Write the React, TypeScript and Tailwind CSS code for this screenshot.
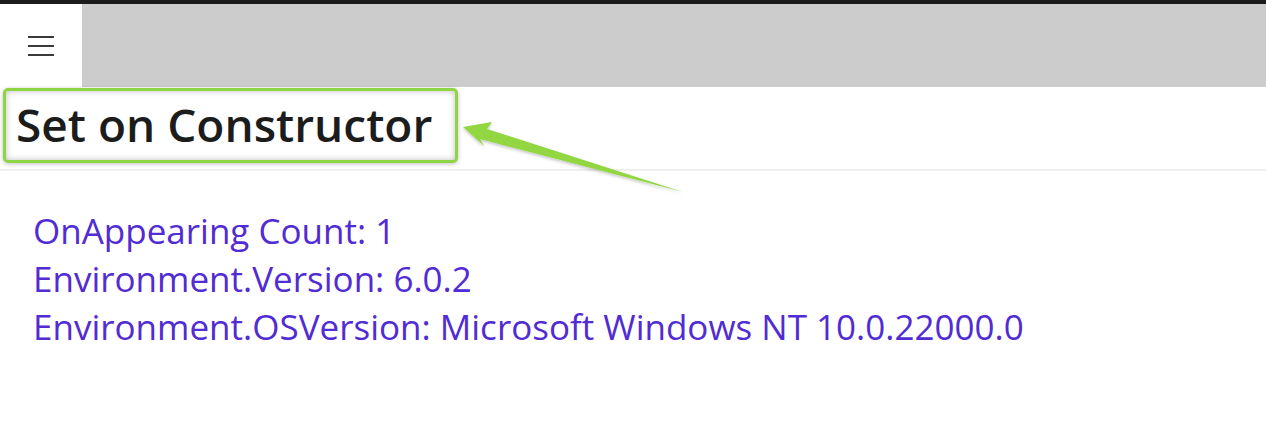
import React from "react";

export default function App() {
  return (
    <div className="relative w-[1266px] h-[429px] overflow-hidden bg-white" style={{ fontFamily: '"Open Sans", "Noto Sans", sans-serif' }}>
      {/* window top strip */}
      <div className="h-[4px] bg-[#1b1b1b]" />
      {/* nav bar */}
      <div className="flex h-[83px]">
        <div className="w-[82px] bg-white rounded-tl-[8px] flex items-center justify-center">
          <div className="flex flex-col gap-[7px] pt-[1px]">
            <div className="w-[26px] h-[2px] bg-[#3a3a3a]" />
            <div className="w-[26px] h-[2px] bg-[#3a3a3a]" />
            <div className="w-[26px] h-[2px] bg-[#3a3a3a]" />
          </div>
        </div>
        <div className="flex-1 bg-[#cccccc]" />
      </div>
      {/* title */}
      <div className="h-[84px] flex items-center px-[16px] border-b-2 border-[#efefef]">
        <h1 className="text-[46px] font-semibold text-[#1c1c1c] leading-none pb-[8px]">Set on Constructor</h1>
      </div>
      {/* content */}
      <div className="pt-[36px] px-[33px] text-[35px] leading-[48px] text-[#512bd4]">
        <div>OnAppearing Count: 1</div>
        <div>Environment.Version: 6.0.2</div>
        <div>Environment.OSVersion: Microsoft Windows NT 10.0.22000.0</div>
      </div>

      {/* annotation box */}
      <div className="absolute left-[3px] top-[88px] w-[455px] h-[75px] rounded-[5px] border-[3px] border-[#8fd444] shadow-[inset_0_0_6px_rgba(0,0,0,0.25),0_1px_4px_rgba(0,0,0,0.25)] pointer-events-none" />
      {/* annotation arrow */}
      <svg className="absolute left-0 top-0 pointer-events-none" width="1266" height="429" viewBox="0 0 1266 429">
        <defs>
          <filter id="sh" x="-10%" y="-10%" width="120%" height="130%">
            <feDropShadow dx="0" dy="1.5" stdDeviation="1.5" floodColor="#000" floodOpacity="0.25" />
          </filter>
        </defs>
        <polygon
          points="463,127 492,122 487,129 683,192 480,139 484,146"
          fill="#92d642"
          filter="url(#sh)"
        />
      </svg>
    </div>
  );
}
